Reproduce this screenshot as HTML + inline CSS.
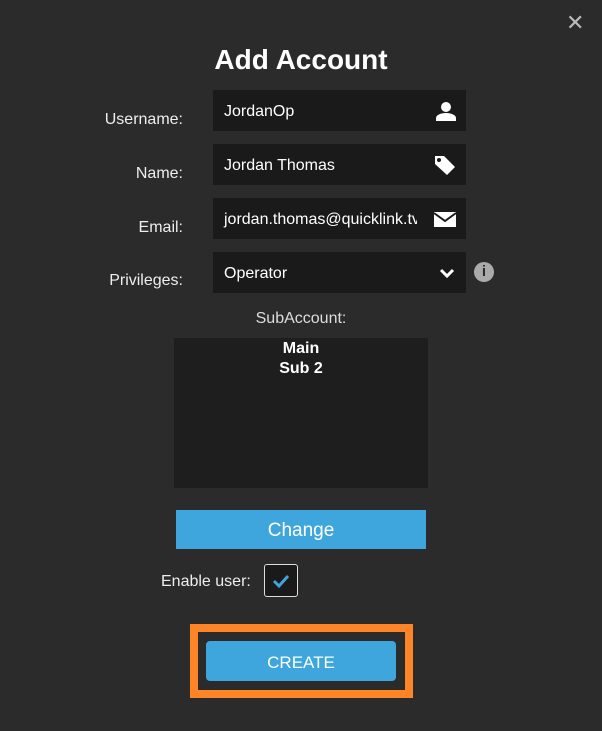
<html><head><style>
body{margin:0;width:602px;height:731px;background:#2b2b2b;font-family:"Liberation Sans",sans-serif;color:#fff;position:relative;overflow:hidden}
.a{position:absolute}
.lbl{position:absolute;right:419px;font-size:16px;color:#eee}
.in{position:absolute;left:213px;width:253px;height:41px;background:#1a1a1a;font-size:16px;line-height:43px;box-sizing:border-box;padding-left:11px;overflow:hidden;white-space:nowrap}
.ic{position:absolute;right:9px;top:10px}
</style></head><body>
<div class="a" style="left:566px;top:10px;font-size:22px;color:#bbb">✕</div>
<div class="a" style="left:0;width:602px;top:44px;text-align:center;font-size:28px;font-weight:bold">Add Account</div>
<div class="lbl" style="top:111px">Username:</div>
<div class="in" style="top:90px">JordanOp<svg class="ic" width="22" height="22" viewBox="0 0 22 22"><circle cx="11" cy="7" r="5" fill="#fff"/><path d="M1 21v-3c0-3 5-5 10-5s10 2 10 5v3z" fill="#fff"/></svg></div>
<div class="lbl" style="top:165px">Name:</div>
<div class="in" style="top:144px">Jordan Thomas<svg class="ic" width="24" height="22" viewBox="0 0 24 22"><path d="M2 2h9l11 11-8 8L2 10z" fill="#fff"/><circle cx="6" cy="6" r="2" fill="#1a1a1a"/></svg></div>
<div class="lbl" style="top:219px">Email:</div>
<div class="in" style="top:198px">jordan.thomas@quicklink.tv<span style="position:absolute;left:204px;top:0;width:49px;height:41px;background:#1a1a1a"></span><svg class="ic" width="24" height="22" viewBox="0 0 24 22"><rect x="1" y="4" width="22" height="15" fill="#fff"/><path d="M1 5l11 8 11-8" stroke="#1a1a1a" stroke-width="2" fill="none"/></svg></div>
<div class="lbl" style="top:272px">Privileges:</div>
<div class="in" style="top:252px">Operator<svg class="ic" width="20" height="22" viewBox="0 0 20 22"><path d="M4 8l6 6 6-6" stroke="#fff" stroke-width="3" fill="none"/></svg></div>
<div class="a" style="left:474px;top:262px;width:20px;height:20px;border-radius:50%;background:#aaa;color:#2b2b2b;font-weight:bold;font-size:15px;text-align:center;line-height:20px">i</div>
<div class="a" style="left:0;width:602px;text-align:center;top:310px;font-size:16px;color:#ddd">SubAccount:</div>
<div class="a" style="left:174px;top:338px;width:254px;height:150px;background:#1e1e1e;text-align:center;font-weight:bold;font-size:16px;line-height:20px;padding-top:1px;box-sizing:border-box">Main<br>Sub 2</div>
<div class="a" style="left:176px;top:510px;width:250px;height:39px;background:#3ea6dc;text-align:center;line-height:42px;font-size:19px">Change</div>
<div class="a" style="left:161px;top:573px;font-size:16px;color:#eee">Enable user:</div>
<div class="a" style="left:264px;top:564px;width:34px;height:33px;box-sizing:border-box;border:1px solid #ddd;border-radius:3px;background:#1a1a1a"><svg width="32" height="31" viewBox="0 0 32 31"><path d="M9 16l5 5 9-10" stroke="#3ea6dc" stroke-width="3" fill="none"/></svg></div>
<div class="a" style="left:190px;top:624px;width:223px;height:74px;box-sizing:border-box;border:8px solid #fd8427"></div>
<div class="a" style="left:206px;top:641px;width:190px;height:40px;border-radius:4px;background:#3ea6dc;text-align:center;line-height:43px;font-size:17px">CREATE</div>
</body></html>
